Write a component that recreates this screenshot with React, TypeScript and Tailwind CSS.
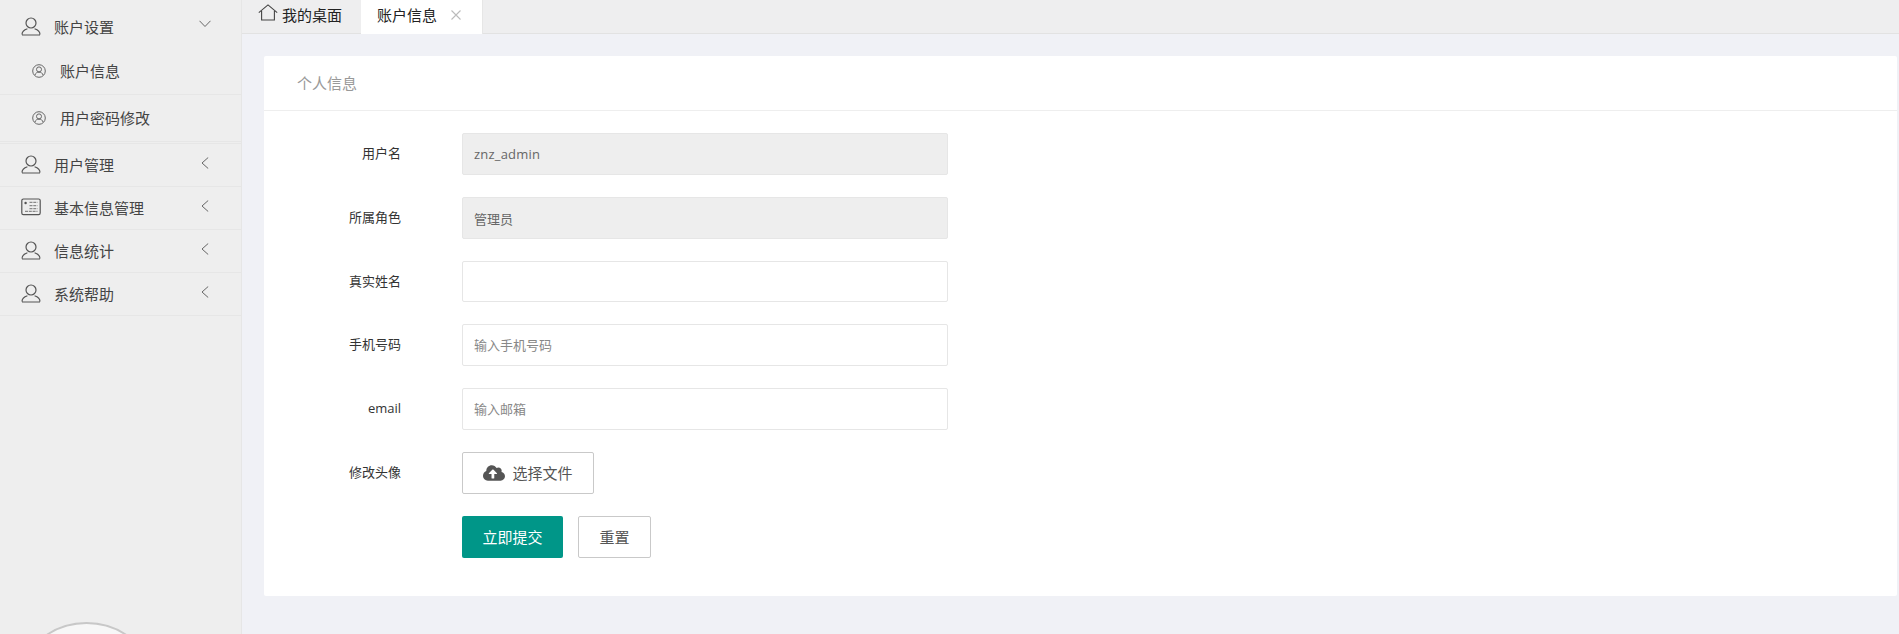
import { FaCloudUploadAlt } from 'react-icons/fa'

const font = { fontFamily: '"Open Sans", "Noto Sans CJK SC", sans-serif' }

function PersonIcon() {
  return (
    <svg width="20" height="19" viewBox="0 0 20 19" fill="none" stroke="#555" strokeWidth="1.2">
      <circle cx="10" cy="6" r="5" />
      <path d="M1 17.6c0-3 2.4-4.8 5.4-5.8M19 17.6c0-3-2.4-4.8-5.4-5.8M1 18h18" />
    </svg>
  )
}

function CardIcon() {
  return (
    <svg width="20" height="18" viewBox="0 0 20 18" fill="none" stroke="#555" strokeWidth="1.2">
      <rect x="0.8" y="1" width="18.4" height="15.6" rx="1.6" />
      <circle cx="4.6" cy="5" r="1.2" fill="#555" stroke="none" />
      <path d="M8.5 4.4h8M8.5 7.6h8M8.5 10.6h8M4 13.4h12.5" stroke="#888" strokeDasharray="3 0.8" />
    </svg>
  )
}

function CirclePerson() {
  return (
    <svg width="14" height="14" viewBox="0 0 14 14" fill="none" stroke="#666" strokeWidth="1">
      <circle cx="7" cy="7" r="6.3" />
      <circle cx="7" cy="5.4" r="2.5" />
      <path d="M3 11c.5-2 2-2.8 4-2.8s3.5.8 4 2.8" />
    </svg>
  )
}

function Chevron({ open }: { open?: boolean }) {
  return open ? (
    <svg width="12" height="8" viewBox="0 0 12 8" fill="none" stroke="#666" strokeWidth="1">
      <path d="M0.5 0.8 6 6.5l5.5-5.7" />
    </svg>
  ) : (
    <svg width="8" height="12" viewBox="0 0 8 12" fill="none" stroke="#666" strokeWidth="1">
      <path d="M7.2 0.5 1 6l6.2 5.5" />
    </svg>
  )
}

function MenuRow({ label, icon }: { label: string; icon?: 'card' }) {
  return (
    <div className="flex h-[43px] items-center border-b border-[#e6e6e6] pl-[21px] text-[15px] text-[#444]">
      <span className="flex w-[33px] -translate-y-[1px]">{icon === 'card' ? <CardIcon /> : <PersonIcon />}</span>
      <span className="w-[147px]">{label}</span>
      <span className="-translate-y-[2px]">
        <Chevron />
      </span>
    </div>
  )
}

function SubRow({ label }: { label: string }) {
  return (
    <div className="flex h-[47px] items-center border-b border-[#e6e6e6] pl-[32px] text-[15px] text-[#444]">
      <span className="flex w-[28px]">
        <CirclePerson />
      </span>
      <span>{label}</span>
    </div>
  )
}

function FormRow({ label, children }: { label: string; children: React.ReactNode }) {
  return (
    <div className="flex items-center">
      <label className="w-[137px] text-right text-[13px] text-[#333]">{label}</label>
      <div className="ml-[61px]">{children}</div>
    </div>
  )
}

const inputClass =
  'block w-[486px] rounded-[2px] border border-[#e6e6e6] px-[11px] text-[13px] text-[#666] outline-none placeholder:text-[#888]'

export default function App() {
  return (
    <div className="flex h-screen overflow-hidden bg-[#f0f1f6]" style={font}>
      <aside className="w-[242px] shrink-0 overflow-hidden border-r border-[#e6e6e6] bg-[#eeeeee]">
        <div className="flex h-[48px] items-center pl-[21px] pt-[6px] text-[15px] text-[#444]">
          <span className="flex w-[33px] -translate-y-[1px]">
            <PersonIcon />
          </span>
          <span className="w-[145px]">账户设置</span>
          <span className="-translate-y-[3px]">
            <Chevron open />
          </span>
        </div>
        <SubRow label="账户信息" />
        <SubRow label="用户密码修改" />
        <div className="h-[1px]" />
        <div className="border-t border-[#e6e6e6]">
          <MenuRow label="用户管理" />
          <MenuRow label="基本信息管理" icon="card" />
          <MenuRow label="信息统计" />
          <MenuRow label="系统帮助" />
        </div>
        <div className="ml-[14px] mt-[306px] h-[145px] w-[145px] rounded-full border-2 border-[#c8c8c8] bg-[#f7f7f7]" />
      </aside>

      <main className="flex min-w-0 flex-1 flex-col">
        <div className="flex h-[34px] shrink-0 border-b border-[#e2e2e2] bg-[#eeeeef] text-[15px] text-[#222]">
          <div className="flex w-[119px] items-start pl-[16px] pt-[5px]">
            <svg className="mt-[-1px]" width="20" height="17" viewBox="0 0 20 17" fill="none" stroke="#444" strokeWidth="1.1">
              <path d="M0.8 8.6 10 0.9l9.2 7.7M3.6 7v9h12.8V7" />
            </svg>
            <span className="ml-[4px] leading-[20px]">我的桌面</span>
          </div>
          <div className="flex h-[34px] w-[122px] items-start border-r border-[#e6e6e6] bg-white pl-[16px] pt-[5px]">
            <span className="leading-[20px]">账户信息</span>
            <svg className="ml-[14px] mt-[5px]" width="10" height="10" viewBox="0 0 10 10" stroke="#bbb" strokeWidth="1.1">
              <path d="M0.5 0.5l9 9M9.5 0.5l-9 9" />
            </svg>
          </div>
        </div>

        <div className="flex-1 pl-[22px] pr-[2px] pt-[22px]">
          <div className="h-[540px] rounded-[2px] bg-white">
            <div className="flex h-[55px] items-center border-b border-[#eeeeee] pl-[33px] text-[15px] text-[#999]">
              个人信息
            </div>
            <div className="flex flex-col gap-[22px] pt-[22px]">
              <FormRow label="用户名">
                <input className={`${inputClass} h-[42px] bg-[#eeeeee] tracking-[0.2px]`} disabled value="znz_admin" />
              </FormRow>
              <FormRow label="所属角色">
                <input className={`${inputClass} h-[42px] bg-[#eeeeee]`} disabled value="管理员" />
              </FormRow>
              <FormRow label="真实姓名">
                <input className={`${inputClass} h-[41px] bg-white`} />
              </FormRow>
              <FormRow label="手机号码">
                <input className={`${inputClass} h-[42px] bg-white`} placeholder="输入手机号码" />
              </FormRow>
              <FormRow label="email">
                <input className={`${inputClass} h-[42px] bg-white`} placeholder="输入邮箱" />
              </FormRow>
              <FormRow label="修改头像">
                <button className="flex h-[42px] w-[132px] items-center justify-center gap-[7px] rounded-[2px] border border-[#c9c9c9] bg-white text-[15px] text-[#555]">
                  <FaCloudUploadAlt className="h-[20px] w-[22px] text-[#555]" />
                  选择文件
                </button>
              </FormRow>
              <div className="ml-[198px] flex gap-[15px]">
                <button className="h-[42px] w-[101px] rounded-[2px] bg-[#009688] text-[15px] text-white">立即提交</button>
                <button className="h-[42px] w-[73px] rounded-[2px] border border-[#c9c9c9] bg-white text-[15px] text-[#555]">重置</button>
              </div>
            </div>
          </div>
        </div>
      </main>
    </div>
  )
}
